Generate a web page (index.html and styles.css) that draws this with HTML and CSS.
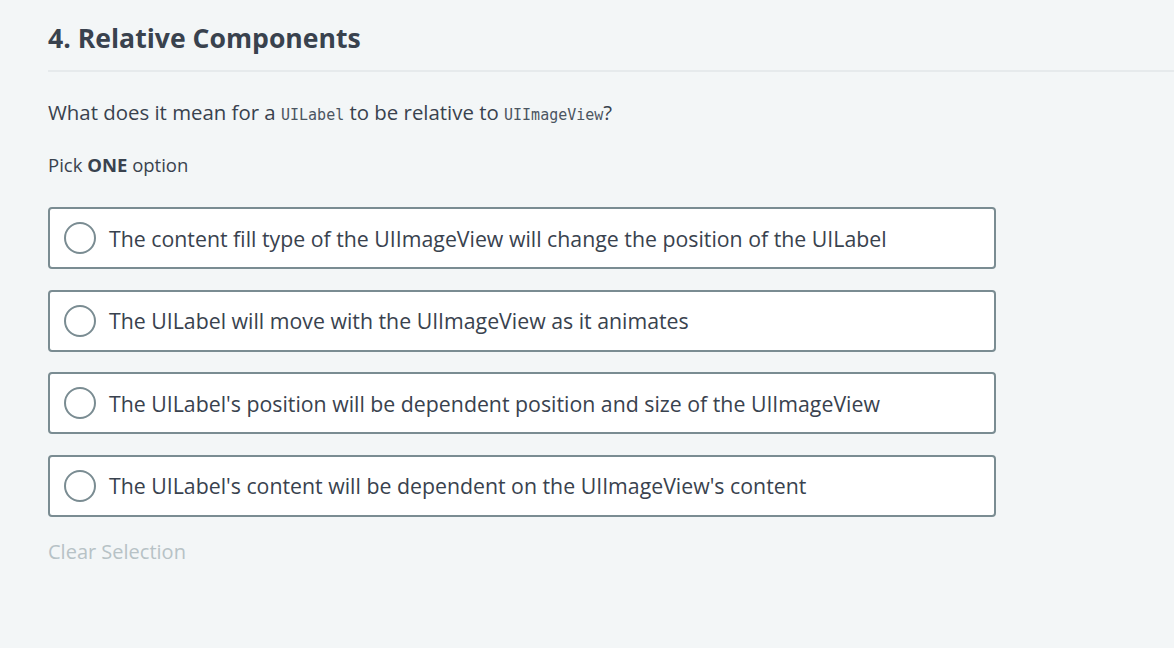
FILE: index.html
```html
<!DOCTYPE html>
<html lang="en">
<head>
    <meta charset="utf-8">
    <title>4. Relative Components</title>
    <link rel="stylesheet" href="styles.css">
</head>
<body>
    <div class="question">
        <h2 class="question-title">4. Relative Components</h2>
        <p class="question-text">What does it mean for a <code>UILabel</code> to be relative to <code>UIImageView</code>?</p>
        <p class="question-hint">Pick <strong>ONE</strong> option</p>

        <div class="options">
            <label class="option"><span class="radio"></span>The content fill type of the UIImageView will change the position of the UILabel</label>
            <label class="option"><span class="radio"></span>The UILabel will move with the UIImageView as it animates</label>
            <label class="option"><span class="radio"></span>The UILabel's position will be dependent position and size of the UIImageView</label>
            <label class="option"><span class="radio"></span>The UILabel's content will be dependent on the UIImageView's content</label>
        </div>

        <div class="clear-selection">Clear Selection</div>
    </div>
</body>
</html>
```

FILE: styles.css
```css
body {
    margin: 0;
    background-color: #f3f6f7;
    font-family: "Open Sans", sans-serif;
    color: #39424e;
}
.question {
    padding: 20px 0 0 48px;
}
.question-title {
    margin: 0;
    font-size: 26.6px;
    font-weight: 700;
    line-height: 36px;
    padding-bottom: 14px;
    border-bottom: 2px solid #e6eaec;
}
.question-text {
    margin: 25px 0 0;
    font-size: 20.4px;
    line-height: 30px;
}
.question-text code {
    font-family: "DejaVu Sans Mono", monospace;
    font-size: 15px;
    color: #4b5561;
}
.question-hint {
    margin: 22px 0 0;
    font-size: 18.5px;
    line-height: 26px;
}
.options {
    display: flex;
    flex-direction: column;
    gap: 20.6px;
    width: 948px;
    margin-top: 29px;
}
.option {
    display: flex;
    align-items: center;
    height: 58px;
    background-color: #fff;
    border: 2px solid #7a8c92;
    border-radius: 4px;
    padding-left: 14px;
    font-size: 21.3px;
    color: #39424e;
    cursor: pointer;
}
.radio {
    width: 28px;
    height: 28px;
    border: 2px solid #7a8c92;
    border-radius: 50%;
    margin-right: 13px;
    flex-shrink: 0;
}
.clear-selection {
    margin-top: 21px;
    font-size: 20px;
    color: #b7c2c6;
}
```
